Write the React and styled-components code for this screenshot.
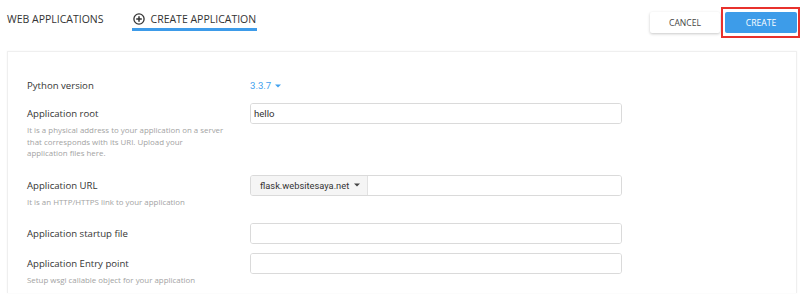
import styled, { createGlobalStyle } from "styled-components";

const GlobalStyle = createGlobalStyle`
	body {
		margin: 0;
		background: #ffffff;
		font-family: "Open Sans", "Liberation Sans", sans-serif;
		color: #333333;
	}
`;

function Caret({ color }) {
	return (
		<CaretSvg width="6" height="4" viewBox="0 0 6 4">
			<path d="M0 0.5 L6 0.5 L3 3.5 Z" fill={color} />
		</CaretSvg>
	);
}

function PlusCircle() {
	return (
		<svg width="12" height="12" viewBox="0 0 12 12">
			<circle cx="6" cy="6" r="5.1" fill="none" stroke="#333" strokeWidth="1.3" />
			<path d="M6 3.2 V8.8 M3.2 6 H8.8" stroke="#333" strokeWidth="1.5" />
		</svg>
	);
}

export default function App() {
	return (
		<StyledPage>
			<GlobalStyle />
			<Header>
				<Tabs>
					<Tab>WEB APPLICATIONS</Tab>
					<Tab $active>
						<PlusCircle />
						CREATE APPLICATION
					</Tab>
				</Tabs>
				<Actions>
					<Button>CANCEL</Button>
					<Highlight>
						<Button $primary>CREATE</Button>
					</Highlight>
				</Actions>
			</Header>
			<Panel>
				<Row $short>
					<LabelBox>
						<Label $short>Python version</Label>
					</LabelBox>
					<Version>
						3.3.7
						<Caret color="#42a1ee" />
					</Version>
				</Row>
				<Row>
					<LabelBox>
						<Label>Application root</Label>
						<Hint>
							It is a physical address to your application on a server
							<br />
							that corresponds with its URI. Upload your
							<br />
							application files here.
						</Hint>
					</LabelBox>
					<Field>
						<Input defaultValue="hello" />
					</Field>
				</Row>
				<Row>
					<LabelBox>
						<Label>Application URL</Label>
						<Hint>It is an HTTP/HTTPS link to your application</Hint>
					</LabelBox>
					<Field>
						<Addon>
							flask.websitesaya.net
							<Caret color="#444" />
						</Addon>
						<Input />
					</Field>
				</Row>
				<Row>
					<LabelBox>
						<Label>Application startup file</Label>
					</LabelBox>
					<Field>
						<Input />
					</Field>
				</Row>
				<Row>
					<LabelBox>
						<Label>Application Entry point</Label>
						<Hint>Setup wsgi callable object for your application</Hint>
					</LabelBox>
					<Field>
						<Input />
					</Field>
				</Row>
			</Panel>
		</StyledPage>
	);
}

const StyledPage = styled.div`
	width: 800px;
	height: 298px;
	overflow: hidden;
`;

const Header = styled.div`
	display: flex;
	justify-content: space-between;
	align-items: flex-start;
	height: 22px;
	padding: 10px 0 0 7px;
`;

const Tabs = styled.div`
	display: flex;
	gap: 28px;
`;

const Tab = styled.div`
	display: flex;
	align-items: center;
	gap: 6px;
	height: 18px;
	font-size: 10.5px;
	color: #333;
	border-bottom: 3px solid ${(p) => (p.$active ? "#3d9be9" : "transparent")};
	padding: 0 ${(p) => (p.$active ? "1px" : "0")};
`;

const Actions = styled.div`
	display: flex;
	align-items: center;
	gap: 1px;
	margin-top: -3px;
`;

const Highlight = styled.div`
	display: flex;
	border: 2px solid #e8312c;
	padding: 3px 1px 3px 2px;
`;

const Button = styled.button`
	width: ${(p) => (p.$primary ? "72px" : "70px")};
	height: 21px;
	border: none;
	border-radius: 2px;
	font-family: "Open Sans", "Liberation Sans", sans-serif;
	font-size: 8.6px;
	background: ${(p) => (p.$primary ? "#3d9ce9" : "#ffffff")};
	color: ${(p) => (p.$primary ? "#ffffff" : "#444")};
	box-shadow: ${(p) =>
		p.$primary ? "none" : "0 1px 3px rgba(0, 0, 0, 0.22)"};
	padding: 0;
`;

const Panel = styled.div`
	margin: 19px 3px 0 7px;
	border: 1px solid #efefef;
	border-bottom: none;
	box-shadow: 0 0 2px rgba(0, 0, 0, 0.04);
	padding: 25px 0 0 19px;
	display: flex;
	flex-direction: column;
	gap: 9px;
`;

const Row = styled.div`
	display: grid;
	grid-template-columns: 223px 372px;
	align-items: start;
	min-height: ${(p) => (p.$short ? "17px" : "21px")};
`;

const LabelBox = styled.div`
	display: flex;
	flex-direction: column;
`;

const Label = styled.div`
	font-size: 9.6px;
	line-height: ${(p) => (p.$short ? "17px" : "21px")};
	color: #353535;
`;

const Hint = styled.div`
	font-size: 7.9px;
	line-height: 11.5px;
	color: #a3a3a3;
	white-space: nowrap;
	margin-top: 1px;
	margin-bottom: 6px;
`;

const Version = styled.div`
	display: flex;
	align-items: center;
	gap: 4px;
	height: 17px;
	font-family: Roboto, "Liberation Sans", sans-serif;
	font-size: 9.6px;
	color: #42a1ee;
`;

const CaretSvg = styled.svg`
	display: block;
	flex-shrink: 0;
`;

const Field = styled.div`
	display: flex;
	height: 21px;
	border: 1px solid #dadada;
	border-radius: 3px;
	overflow: hidden;
	box-sizing: border-box;
`;

const Addon = styled.div`
	display: flex;
	align-items: center;
	gap: 5px;
	padding: 0 9px 0 9px;
	width: 117px;
	flex-shrink: 0;
	box-sizing: border-box;
	background: #f5f5f5;
	border-right: 1px solid #e2e2e2;
	font-family: Roboto, "Liberation Sans", sans-serif;
	font-size: 9.3px;
	color: #333;
	white-space: nowrap;
`;

const Input = styled.input`
	flex: 1;
	min-width: 0;
	border: none;
	outline: none;
	padding: 0 3px;
	font-family: Roboto, "Liberation Sans", sans-serif;
	font-size: 9.6px;
	color: #333;
	background: #fff;
`;
